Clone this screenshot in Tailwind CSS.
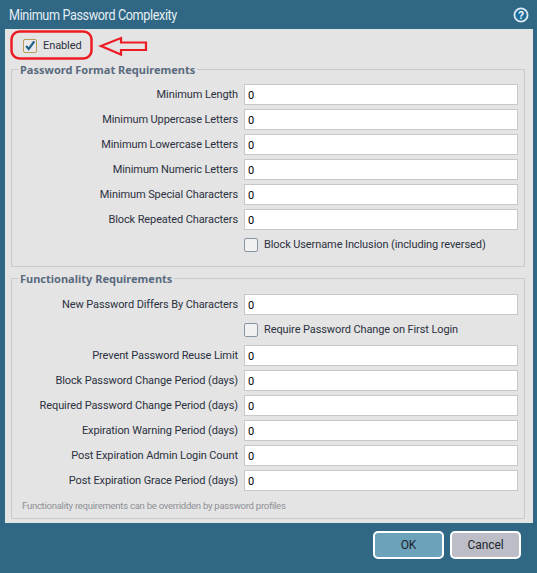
<!DOCTYPE html>
<html lang="en">
<head>
<meta charset="UTF-8" />
<title>Minimum Password Complexity</title>
<script src="https://cdn.jsdelivr.net/npm/@tailwindcss/browser@4"></script>
</head>
<body class="bg-[#2f6785] font-['Roboto',sans-serif] text-[11px] tracking-[-0.1px] text-[#2b3140] overflow-hidden">
<div class="relative w-[537px] h-[573px]">
  <!-- title bar -->
  <div class="h-[29px] flex items-center justify-between pl-[9px] pr-[8px]">
    <span class="pt-[2px] text-[14px] text-[#e4eef3] tracking-[-0.4px] scale-x-[0.9] origin-left">Minimum Password Complexity</span>
    <svg width="16" height="16" viewBox="0 0 16 16">
      <circle cx="8" cy="8" r="6.6" fill="#1f6f9e" stroke="#dfeaf0" stroke-width="1.8"/>
      <text x="8" y="11.5" text-anchor="middle" font-size="10" font-weight="700" fill="#fff" font-family="Liberation Sans">?</text>
    </svg>
  </div>

  <!-- panel -->
  <div class="ml-[5px] w-[528px] h-[494px] bg-[#e4e4e4] pl-[6px] pr-[9px]">
    <div class="h-[33px] flex items-center pl-[12px] gap-[6px]">
      <span class="w-[14px] h-[14px] rounded-[2px] bg-[#e9e9e9] border border-[#b59a5a] flex items-center justify-center">
        <svg width="14" height="14" viewBox="0 0 14 14"><path d="M2.5 7l3 3.4L12 1.5" fill="none" stroke="#1f5f8a" stroke-width="2.6"/></svg>
      </span>
      <span class="pt-[2px]">Enabled</span>
    </div>

    <fieldset class="border border-[#cacaca] h-[205px] pl-[1px] pr-[6px] pb-0 block">
      <legend class="ml-[5px] px-[2px] font-['Noto_Sans',sans-serif] text-[11px] tracking-normal font-bold text-[#5a6a7e] leading-[14px]"><span class="relative top-[1px]">Password Format Requirements</span></legend>
      <div class="flex flex-col gap-[4px] mt-[8px]">
        <div class="flex items-center h-[21px]"><label class="pt-[2px] w-[225px] text-right">Minimum Length</label><div class="ml-[6px] w-[274px] h-[21px] bg-white border border-[#c8c8c8] pl-[3px] leading-[21px] text-black">0</div></div>
        <div class="flex items-center h-[21px]"><label class="pt-[2px] w-[225px] text-right">Minimum Uppercase Letters</label><div class="ml-[6px] w-[274px] h-[21px] bg-white border border-[#c8c8c8] pl-[3px] leading-[21px] text-black">0</div></div>
        <div class="flex items-center h-[21px]"><label class="pt-[2px] w-[225px] text-right">Minimum Lowercase Letters</label><div class="ml-[6px] w-[274px] h-[21px] bg-white border border-[#c8c8c8] pl-[3px] leading-[21px] text-black">0</div></div>
        <div class="flex items-center h-[21px]"><label class="pt-[2px] w-[225px] text-right">Minimum Numeric Letters</label><div class="ml-[6px] w-[274px] h-[21px] bg-white border border-[#c8c8c8] pl-[3px] leading-[21px] text-black">0</div></div>
        <div class="flex items-center h-[21px]"><label class="pt-[2px] w-[225px] text-right">Minimum Special Characters</label><div class="ml-[6px] w-[274px] h-[21px] bg-white border border-[#c8c8c8] pl-[3px] leading-[21px] text-black">0</div></div>
        <div class="flex items-center h-[21px]"><label class="pt-[2px] w-[225px] text-right">Block Repeated Characters</label><div class="ml-[6px] w-[274px] h-[21px] bg-white border border-[#c8c8c8] pl-[3px] leading-[21px] text-black">0</div></div>
        <div class="flex items-center h-[21px] pl-[231px] gap-[6px]"><span class="w-[14px] h-[14px] rounded-[2px] bg-[#f1f1f1] border border-[#8a96a8]"></span><span class="pt-[2px]">Block Username Inclusion (including reversed)</span></div>
      </div>
    </fieldset>

    <fieldset class="border border-[#cacaca] h-[248px] mt-[4px] pl-[1px] pr-[6px] pb-0 block">
      <legend class="ml-[5px] px-[2px] font-['Noto_Sans',sans-serif] text-[11px] tracking-normal font-bold text-[#5a6a7e] leading-[14px]"><span class="relative top-[1px]">Functionality Requirements</span></legend>
      <div class="flex flex-col gap-[4px] mt-[9px]">
        <div class="flex items-center h-[21px]"><label class="pt-[2px] w-[225px] text-right">New Password Differs By Characters</label><div class="ml-[6px] w-[274px] h-[21px] bg-white border border-[#c8c8c8] pl-[3px] leading-[21px] text-black">0</div></div>
        <div class="flex items-center h-[21px] mb-[1px] pl-[231px] gap-[6px]"><span class="w-[14px] h-[14px] rounded-[2px] bg-[#f1f1f1] border border-[#8a96a8]"></span><span class="pt-[2px]">Require Password Change on First Login</span></div>
        <div class="flex items-center h-[21px]"><label class="pt-[2px] w-[225px] text-right">Prevent Password Reuse Limit</label><div class="ml-[6px] w-[274px] h-[21px] bg-white border border-[#c8c8c8] pl-[3px] leading-[21px] text-black">0</div></div>
        <div class="flex items-center h-[21px]"><label class="pt-[2px] w-[225px] text-right">Block Password Change Period (days)</label><div class="ml-[6px] w-[274px] h-[21px] bg-white border border-[#c8c8c8] pl-[3px] leading-[21px] text-black">0</div></div>
        <div class="flex items-center h-[21px]"><label class="pt-[2px] w-[225px] text-right">Required Password Change Period (days)</label><div class="ml-[6px] w-[274px] h-[21px] bg-white border border-[#c8c8c8] pl-[3px] leading-[21px] text-black">0</div></div>
        <div class="flex items-center h-[21px]"><label class="pt-[2px] w-[225px] text-right">Expiration Warning Period (days)</label><div class="ml-[6px] w-[274px] h-[21px] bg-white border border-[#c8c8c8] pl-[3px] leading-[21px] text-black">0</div></div>
        <div class="flex items-center h-[21px]"><label class="pt-[2px] w-[225px] text-right">Post Expiration Admin Login Count</label><div class="ml-[6px] w-[274px] h-[21px] bg-white border border-[#c8c8c8] pl-[3px] leading-[21px] text-black">0</div></div>
        <div class="flex items-center h-[21px]"><label class="pt-[2px] w-[225px] text-right">Post Expiration Grace Period (days)</label><div class="ml-[6px] w-[274px] h-[21px] bg-white border border-[#c8c8c8] pl-[3px] leading-[21px] text-black">0</div></div>
      </div>
      <p class="mt-[8px] pl-[9px] text-[9.5px] tracking-[-0.25px] leading-[14px] text-[#8d8f94]">Functionality requirements can be overridden by password profiles</p>
    </fieldset>
  </div>

  <!-- footer buttons -->
  <div class="flex justify-end gap-[6px] pr-[16px] pt-[8px]">
    <button class="w-[71px] h-[28px] rounded-[5px] border-2 border-white bg-[#6ca2ba] text-[#1d2530] text-[12px]">OK</button>
    <button class="w-[71px] h-[28px] rounded-[5px] border-2 border-white bg-[#bcbdc6] text-[#1d2530] text-[12px]">Cancel</button>
  </div>

  <!-- red annotation drawn on top of the screenshot -->
  <svg class="absolute left-0 top-0 pointer-events-none" width="160" height="64" viewBox="0 0 160 64">
    <rect x="11.5" y="31.5" width="80" height="27" rx="8" fill="none" stroke="#ed1c24" stroke-width="2.5"/>
    <path d="M101 46 L121 38 V42.5 H146 V50 H121 V54.5 Z" fill="none" stroke="#ed1c24" stroke-width="2.2"/>
  </svg>
</div>
</body>
</html>
